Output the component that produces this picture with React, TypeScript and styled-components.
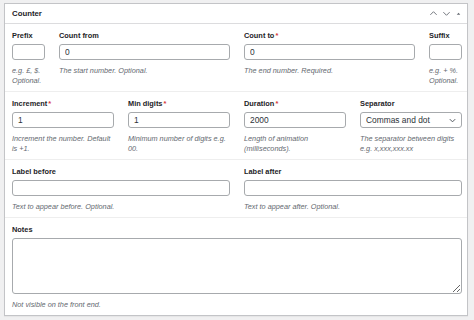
import React from 'react';
import styled, { createGlobalStyle } from 'styled-components';

const GlobalStyle = createGlobalStyle`
  html, body {
    margin: 0;
    padding: 0;
    background: #f0f0f1;
    font-family: "Liberation Sans", Arial, sans-serif;
    color: #1d2327;
  }
  * {
    box-sizing: border-box;
  }
`;

type FieldProps = {
  label: string;
  required?: boolean;
  value?: string;
  hint?: React.ReactNode;
};

const Field = ({ label, required, value, hint }: FieldProps) => (
  <Cell>
    <Label>
      {label}
      {required && <Star>*</Star>}
    </Label>
    <Input defaultValue={value} />
    {hint && <Hint>{hint}</Hint>}
  </Cell>
);

const App = () => (
  <Page>
    <GlobalStyle />
    <Panel>
      <Header>
        <Title>Counter</Title>
        <Tools>
          <svg width="9" height="9" viewBox="0 0 10 10">
            <path d="M1.5 6.5 L5 3 L8.5 6.5" fill="none" stroke="#646970" strokeWidth="1" />
          </svg>
          <svg width="9" height="9" viewBox="0 0 10 10">
            <path d="M1.5 3.5 L5 7 L8.5 3.5" fill="none" stroke="#646970" strokeWidth="1" />
          </svg>
          <svg width="7" height="7" viewBox="0 0 8 8">
            <path d="M2 5.5 L4 3 L6 5.5 Z" fill="#646970" />
          </svg>
        </Tools>
      </Header>

      <Row columns="33px 1fr 1fr 33px">
        <Field
          label="Prefix"
          hint={
            <>
              e.g. £, $.
              <br />
              Optional.
            </>
          }
        />
        <Field label="Count from" value="0" hint="The start number. Optional." />
        <Field label="Count to" required value="0" hint="The end number. Required." />
        <Field
          label="Suffix"
          hint={
            <>
              e.g. + %.
              <br />
              Optional.
            </>
          }
        />
      </Row>

      <Row columns="1fr 1fr 1fr 1fr">
        <Field
          label="Increment"
          required
          value="1"
          hint="Increment the number. Default is +1."
        />
        <Field
          label="Min digits"
          required
          value="1"
          hint="Minimum number of digits e.g. 00."
        />
        <Field
          label="Duration"
          required
          value="2000"
          hint="Length of animation (milliseconds)."
        />
        <Cell>
          <Label>Separator</Label>
          <SelectWrap>
            <Select defaultValue="commas">
              <option value="commas">Commas and dot</option>
            </Select>
            <Caret width="9" height="9" viewBox="0 0 10 10">
              <path d="M2 3.5 L5 6.5 L8 3.5" fill="none" stroke="#50575e" strokeWidth="1.1" />
            </Caret>
          </SelectWrap>
          <Hint>
            The separator between digits
            <br />
            e.g. x,xxx,xxx.xx
          </Hint>
        </Cell>
      </Row>

      <Row columns="1fr 1fr">
        <Field label="Label before" hint="Text to appear before. Optional." />
        <Field label="Label after" hint="Text to appear after. Optional." />
      </Row>

      <Row columns="1fr" last>
        <Cell>
          <Label>Notes</Label>
          <TextArea />
          <Hint>Not visible on the front end.</Hint>
        </Cell>
      </Row>
    </Panel>
  </Page>
);

const Page = styled.div`
  width: 474px;
  height: 320px;
  padding: 3px 6px 0 4px;
`;

const Panel = styled.div`
  background: #fff;
  border: 1px solid #c3c4c7;
  box-shadow: 0 1px 1px rgba(0, 0, 0, 0.04);
`;

const Header = styled.div`
  display: flex;
  align-items: center;
  justify-content: space-between;
  height: 20px;
  padding: 0 5px 0 7px;
  border-bottom: 1px solid #dcdcde;
`;

const Title = styled.h2`
  margin: 0;
  font-size: 7.8px;
  font-weight: 700;
  color: #1d2327;
`;

const Tools = styled.div`
  display: flex;
  align-items: center;
  gap: 4px;
`;

const Row = styled.div<{ columns: string; last?: boolean }>`
  display: grid;
  grid-template-columns: ${(p) => p.columns};
  column-gap: 14px;
  padding: 7px 5px 5px 7px;
  border-bottom: ${(p) => (p.last ? 'none' : '1px solid #eeeeee')};
`;

const Cell = styled.div`
  display: flex;
  flex-direction: column;
  min-width: 0;
`;

const Label = styled.label`
  display: block;
  font-size: 7.4px;
  line-height: 10px;
  font-weight: 700;
  color: #1d2327;
  margin-bottom: 3px;
  white-space: nowrap;
`;

const Star = styled.span`
  color: #d63638;
  margin-left: 1px;
`;

const Input = styled.input`
  width: 100%;
  height: 16px;
  margin: 0;
  padding: 0 5px;
  border: 1px solid #a7aaad;
  border-radius: 3px;
  background: #fff;
  font-family: "Liberation Sans", Arial, sans-serif;
  font-size: 8.4px;
  color: #2c3338;
  outline: none;
`;

const SelectWrap = styled.div`
  position: relative;
  width: 100%;
`;

const Select = styled.select`
  display: block;
  width: 100%;
  height: 16px;
  margin: 0;
  padding: 0 16px 0 5px;
  border: 1px solid #a7aaad;
  border-radius: 3px;
  background: #fff;
  appearance: none;
  font-family: "Liberation Sans", Arial, sans-serif;
  font-size: 8.4px;
  color: #2c3338;
  outline: none;
`;

const Caret = styled.svg`
  position: absolute;
  right: 5px;
  top: 4px;
  pointer-events: none;
`;

const TextArea = styled.textarea`
  width: 100%;
  height: 56px;
  margin: 0;
  padding: 3px 5px;
  border: 1px solid #a7aaad;
  border-radius: 3px;
  background: #fff;
  font-family: "Liberation Sans", Arial, sans-serif;
  font-size: 8.4px;
  display: block;
  outline: none;
  resize: vertical;
`;

const Hint = styled.p`
  margin: 6px 0 0;
  font-size: 7.3px;
  line-height: 10px;
  font-style: italic;
  color: #646970;
`;

export default App;
